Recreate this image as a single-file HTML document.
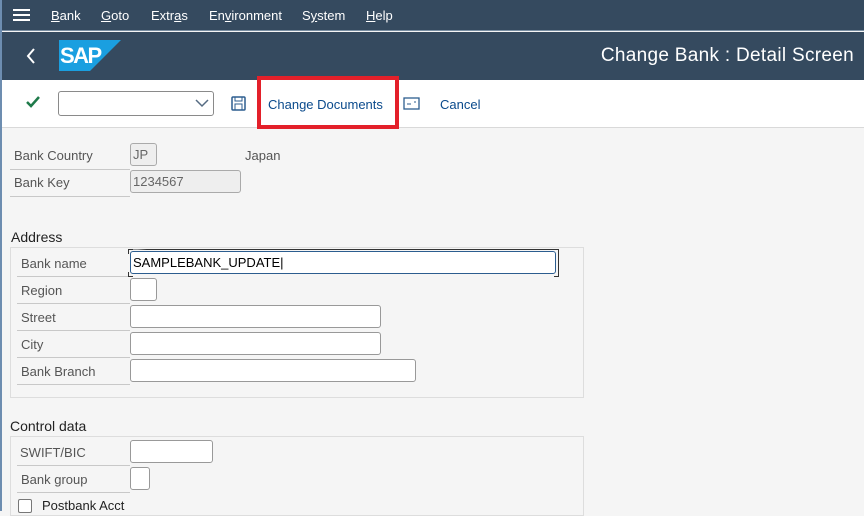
<!DOCTYPE html>
<html><head><style>
*{margin:0;padding:0;box-sizing:border-box}
body{width:864px;height:511px;overflow:hidden;background:#f5f5f5;font-family:"Liberation Sans","Noto Sans CJK JP",sans-serif;position:relative;font-size:13px;color:#333}
.a{position:absolute;white-space:nowrap}
.menu{left:0;top:0;width:864px;height:31px;background:#354a5f;border-bottom:1px solid #7a8fa3}
.menu span{position:absolute;top:8px;color:#fff;font-size:13px}
.title{left:0;top:32px;width:864px;height:48px;background:#354a5f}
.tb{left:0;top:80px;width:864px;height:48px;background:#fff;border-bottom:1px solid #d9d9d9}
.lbl{color:#555;font-size:13px}
.ul{border-bottom:1px solid #c8c8c8;height:27px}
.in{background:#fff;border:1px solid #999;border-radius:3px;height:23px}
.ro{background:#eee;border:1px solid #aaa;border-radius:3px;height:23px;color:#666;padding:3px 1px;font-size:13px}
.grp{border:1px solid #ddd;background:#f5f5f5}
</style></head><body>
<div class="a" style="left:0;top:0;width:2px;height:511px;background:#6d8db0;z-index:5"></div>
<div class="a menu">
<div class="a" style="left:13px;top:9px;width:17px;height:2px;background:#fff;box-shadow:0 5px 0 #fff,0 10px 0 #fff"></div>
<span style="left:51px"><u>B</u>ank</span><span style="left:101px"><u>G</u>oto</span><span style="left:151px">Extr<u>a</u>s</span><span style="left:209px">En<u>v</u>ironment</span><span style="left:302px">S<u>y</u>stem</span><span style="left:366px"><u>H</u>elp</span>
</div>
<div class="a title">
<svg class="a" style="left:24px;top:14px" width="14" height="20"><path d="M10 3L4 10L10 17" stroke="#fff" stroke-width="2" fill="none"/></svg>
<svg class="a" style="left:59px;top:8px" width="62" height="31"><polygon points="0,0 62,0 31,31 0,31" fill="#1a9fe0"/><text x="1" y="23" font-family="Liberation Sans" font-weight="bold" font-size="22" fill="#fff" letter-spacing="-1.5">SAP</text></svg>
<div class="a" style="right:10px;top:13px;color:#fff;font-size:19px;letter-spacing:0.3px">Change Bank : Detail Screen</div>
</div>
<div class="a tb">
<svg class="a" style="left:25px;top:15px" width="16" height="14"><path d="M2 7L6 11L14 2" stroke="#1e7a4a" stroke-width="2.5" fill="none"/></svg>
<div class="a in" style="left:58px;top:11px;width:156px;height:25px;border-color:#8a8a8a"></div>
<svg class="a" style="left:195px;top:19px" width="14" height="9"><path d="M1 1L7 7L13 1" stroke="#556b82" stroke-width="1.5" fill="none"/></svg>
<svg class="a" style="left:231px;top:16px" width="16" height="16"><rect x="1" y="1" width="13" height="13" rx="1" stroke="#2c5d8f" stroke-width="1.5" fill="none"/><rect x="4" y="1" width="7" height="4" stroke="#2c5d8f" fill="none"/><rect x="4" y="8" width="7" height="6" stroke="#2c5d8f" fill="none"/></svg>
<div class="a" style="left:268px;top:17px;color:#0a4a8c;font-size:13px">Change Documents</div>
<svg class="a" style="left:403px;top:17px" width="17" height="13"><rect x="1" y="1" width="15" height="11" stroke="#2c5d8f" stroke-width="1.3" fill="none"/><path d="M4 7H8M11 5H13" stroke="#2c5d8f"/></svg>
<div class="a" style="left:440px;top:17px;color:#0a4a8c;font-size:13px">Cancel</div>
<div class="a" style="left:257px;top:-4px;width:142px;height:53px;border:4px solid #e3202a"></div>
</div>

<div class="a ul lbl" style="left:10px;top:143px;width:120px;padding-top:5px;padding-left:4px">Bank Country</div>
<div class="a ro" style="left:130px;top:143px;width:27px;padding-left:2px">JP</div>
<div class="a lbl" style="left:245px;top:148px">Japan</div>
<div class="a ul lbl" style="left:10px;top:170px;width:120px;padding-top:5px;padding-left:4px">Bank Key</div>
<div class="a ro" style="left:130px;top:170px;width:111px;padding-left:2px">1234567</div>

<div class="a" style="left:11px;top:229px;font-size:14px;color:#222">Address</div>
<div class="a grp" style="left:10px;top:247px;width:574px;height:151px"></div>
<div class="a ul lbl" style="left:17px;top:250px;width:113px;padding-top:6px;padding-left:4px">Bank name</div>
<div class="a" style="left:128px;top:249px;width:431px;height:28px;border:1.5px solid #333;clip-path:polygon(0 0,5px 0,5px 5px,0 5px,0 calc(100% - 5px),5px calc(100% - 5px),5px 100%,0 100%,0 0,100% 0,100% 5px,calc(100% - 5px) 5px,calc(100% - 5px) 0,100% 0,100% 100%,calc(100% - 5px) 100%,calc(100% - 5px) calc(100% - 5px),100% calc(100% - 5px))"></div>
<div class="a in" style="left:130px;top:251px;width:426px;border-color:#2c5d8f;padding:3px 2px;color:#000">SAMPLEBANK_UPDATE|</div>
<div class="a ul lbl" style="left:17px;top:277px;width:113px;padding-top:6px;padding-left:4px">Region</div>
<div class="a in" style="left:130px;top:278px;width:27px"></div>
<div class="a ul lbl" style="left:17px;top:304px;width:113px;padding-top:6px;padding-left:4px">Street</div>
<div class="a in" style="left:130px;top:305px;width:251px"></div>
<div class="a ul lbl" style="left:17px;top:331px;width:113px;padding-top:6px;padding-left:4px">City</div>
<div class="a in" style="left:130px;top:332px;width:251px"></div>
<div class="a ul lbl" style="left:17px;top:358px;width:113px;padding-top:6px;padding-left:4px">Bank Branch</div>
<div class="a in" style="left:130px;top:359px;width:286px"></div>

<div class="a" style="left:10px;top:418px;font-size:14px;color:#222">Control data</div>
<div class="a grp" style="left:10px;top:436px;width:574px;height:80px"></div>
<div class="a ul lbl" style="left:17px;top:439px;width:113px;padding-top:6px;padding-left:3px">SWIFT/BIC</div>
<div class="a in" style="left:130px;top:440px;width:83px"></div>
<div class="a ul lbl" style="left:17px;top:466px;width:113px;padding-top:6px;padding-left:4px">Bank group</div>
<div class="a in" style="left:130px;top:467px;width:20px"></div>
<div class="a" style="left:18px;top:499px;width:14px;height:14px;border:1px solid #777;border-radius:2px;background:#fff"></div>
<div class="a" style="left:42px;top:498px;color:#222">Postbank Acct</div>
</body></html>
